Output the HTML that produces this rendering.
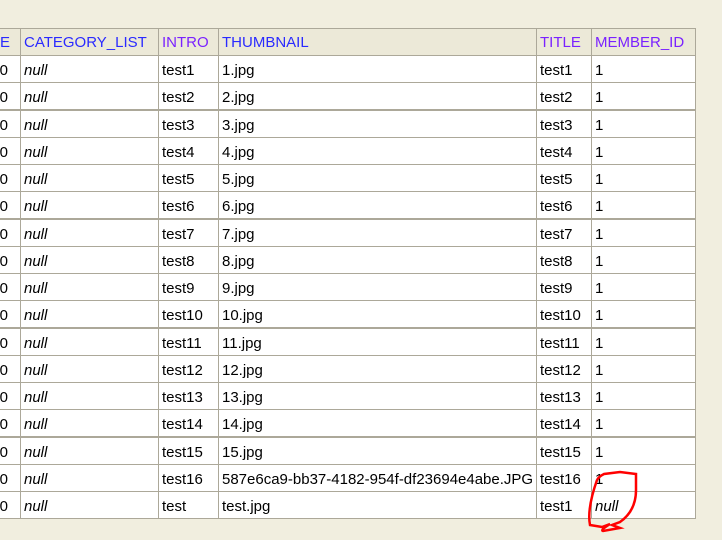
<!DOCTYPE html>
<html><head><meta charset="utf-8"><style>
body{margin:0;width:722px;height:540px;background:#f1eedf;overflow:hidden;position:relative;font-family:"Liberation Sans",Arial,sans-serif;font-size:15px;color:#000}
#t{position:absolute;left:-40px;top:28px;border-top:1px solid #aca899;background:#fff}
.r{display:flex;height:26px;border-bottom:1px solid #aca899}
.r.k{border-bottom:2px solid #aca899}
.c{box-sizing:border-box;border-right:1px solid #aca899;height:26px;line-height:29px;padding-left:3px;white-space:nowrap;overflow:hidden}
.c:nth-child(1){width:61px;text-align:right;padding-right:12px}
.c:nth-child(2){width:138px}
.c:nth-child(3){width:60px}
.c:nth-child(4){width:318px}
.c:nth-child(5){width:55px}
.c:nth-child(6){width:104px}
.h{background:#ece9d8}
.h .c{line-height:28px}
.h .c:nth-child(1){padding-right:10px}
.b{color:#2a2aff}.p{color:#7a22ff}
i{font-style:italic}
</style></head><body>
<div id="t">
<div class="r h"><div class="c b">TYPE</div><div class="c b">CATEGORY_LIST</div><div class="c p">INTRO</div><div class="c b">THUMBNAIL</div><div class="c p">TITLE</div><div class="c p">MEMBER_ID</div></div>
<div class="r"><div class="c">0</div><div class="c"><i>null</i></div><div class="c">test1</div><div class="c">1.jpg</div><div class="c">test1</div><div class="c">1</div></div>
<div class="r k"><div class="c">0</div><div class="c"><i>null</i></div><div class="c">test2</div><div class="c">2.jpg</div><div class="c">test2</div><div class="c">1</div></div>
<div class="r"><div class="c">0</div><div class="c"><i>null</i></div><div class="c">test3</div><div class="c">3.jpg</div><div class="c">test3</div><div class="c">1</div></div>
<div class="r"><div class="c">0</div><div class="c"><i>null</i></div><div class="c">test4</div><div class="c">4.jpg</div><div class="c">test4</div><div class="c">1</div></div>
<div class="r"><div class="c">0</div><div class="c"><i>null</i></div><div class="c">test5</div><div class="c">5.jpg</div><div class="c">test5</div><div class="c">1</div></div>
<div class="r k"><div class="c">0</div><div class="c"><i>null</i></div><div class="c">test6</div><div class="c">6.jpg</div><div class="c">test6</div><div class="c">1</div></div>
<div class="r"><div class="c">0</div><div class="c"><i>null</i></div><div class="c">test7</div><div class="c">7.jpg</div><div class="c">test7</div><div class="c">1</div></div>
<div class="r"><div class="c">0</div><div class="c"><i>null</i></div><div class="c">test8</div><div class="c">8.jpg</div><div class="c">test8</div><div class="c">1</div></div>
<div class="r"><div class="c">0</div><div class="c"><i>null</i></div><div class="c">test9</div><div class="c">9.jpg</div><div class="c">test9</div><div class="c">1</div></div>
<div class="r k"><div class="c">0</div><div class="c"><i>null</i></div><div class="c">test10</div><div class="c">10.jpg</div><div class="c">test10</div><div class="c">1</div></div>
<div class="r"><div class="c">0</div><div class="c"><i>null</i></div><div class="c">test11</div><div class="c">11.jpg</div><div class="c">test11</div><div class="c">1</div></div>
<div class="r"><div class="c">0</div><div class="c"><i>null</i></div><div class="c">test12</div><div class="c">12.jpg</div><div class="c">test12</div><div class="c">1</div></div>
<div class="r"><div class="c">0</div><div class="c"><i>null</i></div><div class="c">test13</div><div class="c">13.jpg</div><div class="c">test13</div><div class="c">1</div></div>
<div class="r k"><div class="c">0</div><div class="c"><i>null</i></div><div class="c">test14</div><div class="c">14.jpg</div><div class="c">test14</div><div class="c">1</div></div>
<div class="r"><div class="c">0</div><div class="c"><i>null</i></div><div class="c">test15</div><div class="c">15.jpg</div><div class="c">test15</div><div class="c">1</div></div>
<div class="r"><div class="c">0</div><div class="c"><i>null</i></div><div class="c">test16</div><div class="c">587e6ca9-bb37-4182-954f-df23694e4abe.JPG</div><div class="c">test16</div><div class="c">1</div></div>
<div class="r"><div class="c">0</div><div class="c"><i>null</i></div><div class="c">test</div><div class="c">test.jpg</div><div class="c">test1</div><div class="c"><i>null</i></div></div>
</div>
<svg style="position:absolute;left:0;top:0" width="722" height="540"><path d="M597 480 C590 500 588 515 590 525 L602 527 L610 524 Q600 530 603 531 L620 528 L612 525 L620 522 C630 515 636 505 636 490 L636 474 L620 472 L604 474 C600 476 598 478 597 480" fill="none" stroke="#f00" stroke-width="2.5"/></svg>
</body></html>
